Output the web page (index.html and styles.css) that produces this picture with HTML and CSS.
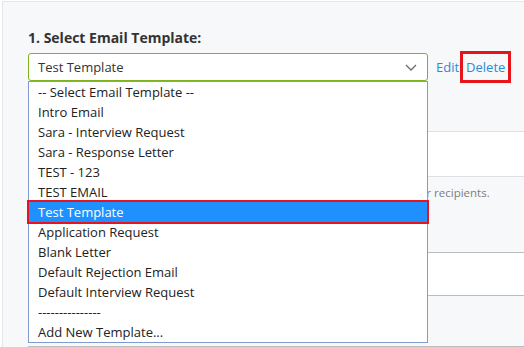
FILE: index.html
```html
<!DOCTYPE html>
<html lang="en">

<head>
  <meta charset="UTF-8">
  <meta name="viewport" content="width=device-width, initial-scale=1.0">
  <title>Select Email Template</title>
  <link rel="stylesheet" href="styles.css">
</head>

<body>
  <div class="page">
    <h2 class="step-title">1. Select Email Template:</h2>

    <div class="template-row">
      <div class="select-wrap">
        <div class="select-box">
          <span>Test Template</span>
          <svg class="chevron" width="12" height="7" viewBox="0 0 12 7">
            <path d="M1 1 L6 6 L11 1" fill="none" stroke="#6b6b6b" stroke-width="1.3" />
          </svg>
        </div>

        <!-- open dropdown list -->
        <ul class="options">
          <li>-- Select Email Template --</li>
          <li>Intro Email</li>
          <li>Sara - Interview Request</li>
          <li>Sara - Response Letter</li>
          <li>TEST - 123</li>
          <li>TEST EMAIL</li>
          <li class="selected">Test Template</li>
          <li>Application Request</li>
          <li>Blank Letter</li>
          <li>Default Rejection Email</li>
          <li>Default Interview Request</li>
          <li>---------------</li>
          <li>Add New Template...</li>
        </ul>
      </div>
      <a class="link link-edit" href="#">Edit</a>
      <a class="link link-marked" href="#">Delete</a>
    </div>

    <div class="panel panel-white"></div>
    <div class="panel panel-note">
      <p>Send to other recipients.</p>
    </div>
    <div class="panel panel-white panel-dark"></div>
    <div class="panel panel-foot"></div>
  </div>
</body>

</html>
```

FILE: styles.css
```css
html,
body {
  margin: 0;
  padding: 0;
  background: #fff;
}

body {
  font-family: "Open Sans", "Noto Sans", sans-serif;
  color: #333;
  overflow: hidden;
}

.page {
  box-sizing: border-box;
  height: 346px;
  margin: 1px 0 0 2px;
  padding: 26px 0 0 25px;
  border-top: 1px solid #e4e6e9;
  border-left: 1px solid #e4e6e9;
  background: #f7f8fa;
}

.step-title {
  margin: 0 0 5px;
  font-size: 14px;
  line-height: 20px;
  font-weight: 700;
  color: #333;
}

.template-row {
  display: flex;
  align-items: center;
  height: 28px;
}

.select-wrap {
  position: relative;
  width: 400px;
}

.select-box {
  display: flex;
  align-items: center;
  justify-content: space-between;
  box-sizing: border-box;
  height: 28px;
  padding: 0 10px 0 9px;
  border: 1px solid #7db41e;
  border-radius: 3px;
  background: #fff;
  font-size: 13px;
}

.chevron {
  margin-top: 1px;
}

.options {
  position: absolute;
  top: 100%;
  left: 0;
  z-index: 5;
  box-sizing: border-box;
  width: 400px;
  margin: 0;
  padding: 0;
  list-style: none;
  border: 1px solid #7f9ccd;
  background: #fff;
}

.options li {
  height: 20px;
  line-height: 20px;
  padding-left: 9px;
  font-size: 13px;
  color: #222;
  white-space: nowrap;
}

.options li.selected {
  background: #1e90ff;
  color: #fff;
  /* the red markers are part of the screenshot annotation */
  outline: 2px solid #e8141c;
}

.link {
  font-size: 13px;
  color: #2b8ad6;
  text-decoration: none;
}

.link-edit {
  margin-left: 8px;
}

.link-marked {
  margin-left: 1px;
  padding: 4px 3px 4px 3px;
  border: 3px solid #e8141c;
}

.panel-white {
  margin-top: 50px;
  height: 44px;
  border-top: 1px solid #dde0e4;
  border-bottom: 1px solid #dde0e4;
  background: #fff;
}

.panel-note {
  height: 75px;
}

.panel-note p {
  margin: 0;
  padding: 8px 0 0 330px;
  font-size: 11.5px;
  color: #7d7d7d;
  white-space: nowrap;
}

.panel-dark {
  margin-top: 0;
  height: 42px;
  border-color: #bcbcbc;
}

.panel-foot {
  height: 50px;
  border-bottom: 2px solid #bcbcbc;
}
```
